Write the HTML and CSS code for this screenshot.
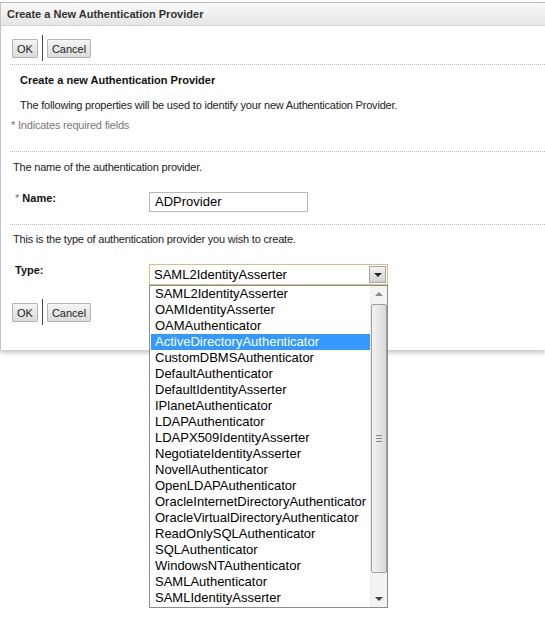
FILE: index.html
```html
<!DOCTYPE html>
<html lang="en">
<head>
    <meta charset="UTF-8">
    <title>Create a New Authentication Provider</title>
    <link rel="stylesheet" href="styles.css">
</head>
<body>
    <div class="panel">
        <div class="title-bar">Create a New Authentication Provider</div>

        <div class="toolbar">
            <button class="btn">OK</button>
            <span class="divider"></span>
            <button class="btn">Cancel</button>
        </div>

        <div class="intro">
            <h2>Create a new Authentication Provider</h2>
            <p>The following properties will be used to identify your new Authentication Provider.</p>
        </div>
        <p class="required"><span class="star">*</span> Indicates required fields</p>

        <div class="group">
            <p class="help">The name of the authentication provider.</p>
            <div class="row">
                <label class="label"><span class="star">*</span> Name:</label>
                <div class="text-input">ADProvider</div>
            </div>
        </div>

        <div class="group">
            <p class="help">This is the type of authentication provider you wish to create.</p>
            <div class="row">
                <label class="label">Type:</label>
                <div class="select">
                    <span class="select-value">SAML2IdentityAsserter</span>
                    <span class="select-arrow"></span>

                    <!-- open dropdown list -->
                    <div class="options">
                        <ul>
                            <li>SAML2IdentityAsserter</li>
                            <li>OAMIdentityAsserter</li>
                            <li>OAMAuthenticator</li>
                            <li class="selected">ActiveDirectoryAuthenticator</li>
                            <li>CustomDBMSAuthenticator</li>
                            <li>DefaultAuthenticator</li>
                            <li>DefaultIdentityAsserter</li>
                            <li>IPlanetAuthenticator</li>
                            <li>LDAPAuthenticator</li>
                            <li>LDAPX509IdentityAsserter</li>
                            <li>NegotiateIdentityAsserter</li>
                            <li>NovellAuthenticator</li>
                            <li>OpenLDAPAuthenticator</li>
                            <li>OracleInternetDirectoryAuthenticator</li>
                            <li>OracleVirtualDirectoryAuthenticator</li>
                            <li>ReadOnlySQLAuthenticator</li>
                            <li>SQLAuthenticator</li>
                            <li>WindowsNTAuthenticator</li>
                            <li>SAMLAuthenticator</li>
                            <li>SAMLIdentityAsserter</li>
                        </ul>
                        <div class="scrollbar">
                            <span class="scroll-up"></span>
                            <div class="track">
                                <div class="thumb"><span class="grip"></span></div>
                            </div>
                            <span class="scroll-down"></span>
                        </div>
                    </div>
                </div>
            </div>
        </div>

        <div class="toolbar bottom">
            <button class="btn">OK</button>
            <span class="divider"></span>
            <button class="btn">Cancel</button>
        </div>
    </div>
</body>
</html>
```

FILE: styles.css
```css
* { box-sizing: border-box; }
body { margin: 0; min-height: 617px; background: #fff; font-family: "Liberation Sans", Arial, sans-serif; font-size: 11px; line-height: 13px; letter-spacing: -0.2px; color: #222; }
p { margin: 0; }

.panel { margin-top: 2px; border-top: 1px solid #bdbdbd; border-left: 1px solid #c4c4c4; height: 348px; box-shadow: 0 3px 4px rgba(0,0,0,0.22); }
.title-bar { height: 23px; line-height: 22px; padding-left: 6px; font-weight: bold; letter-spacing: 0; color: #333; background: linear-gradient(#f9f9f9, #e5e5e5); border-bottom: 1px solid #d6d6d6; }

.toolbar { display: flex; align-items: flex-start; height: 39px; padding: 13px 0 0 2px; margin-left: 9px; border-bottom: 1px dotted #bbb; }
.toolbar.bottom { border-bottom: none; padding-top: 7px; }
.btn { font-family: inherit; font-size: 11px; letter-spacing: 0; height: 19px; padding: 0 4px; border: 1px solid #b5b5b5; border-radius: 1px; background: linear-gradient(#f4f4f4, #dcdcdc); color: #222; }
.divider { width: 1px; height: 26px; margin: -4px 4px 0; background: #444; }

.intro { padding: 9px 0 0 19px; }
.intro h2 { margin: 0 0 12px; font-size: 11px; line-height: 13px; font-weight: bold; color: #111; letter-spacing: 0; }
.required { padding: 7px 0 0 10px; color: #777; }
.star { color: #777; font-weight: normal; }

.group { height: 73px; margin: 0 0 0 9px; padding: 9px 0 0 3px; border-top: 1px dotted #bbb; }
.intro + .required + .group { margin-top: 19px; }
.group + .group { height: 72px; padding-top: 8px; }
.row { display: flex; align-items: flex-start; margin-top: 18px; }
.label { width: 136px; padding-left: 2px; font-weight: bold; letter-spacing: 0; color: #111; }

.text-input { width: 159px; height: 20px; line-height: 18px; padding-left: 5px; border: 1px solid #b9b9b9; font-size: 13px; letter-spacing: 0; color: #000; }

.select { position: relative; width: 239px; height: 21px; border: 1px solid #d6bf80; font-size: 13px; letter-spacing: 0; color: #000; }
.select-value { display: block; line-height: 19px; padding-left: 4px; }
.select-arrow { position: absolute; right: 1px; top: 1px; width: 17px; height: 17px; border: 1px solid #a5a5a5; background: linear-gradient(#f2f2f2, #d2d2d2); }
.select-arrow::after { content: ""; position: absolute; left: 4px; top: 6px; border-left: 4px solid transparent; border-right: 4px solid transparent; border-top: 4px solid #222; }

.options { position: absolute; left: -1px; top: 20px; width: 239px; height: 323px; border: 1px solid #8c8c8c; background: #fff; display: flex; z-index: 2; }
.options ul { list-style: none; margin: 0; padding: 0 0 0 1px; flex: 1; }
.options li { height: 16px; line-height: 16px; padding-left: 4px; white-space: nowrap; }
.options li.selected { background: #3399ff; color: #fff; }

.scrollbar { width: 17px; display: flex; flex-direction: column; background: #f3f3f3; border-left: 1px solid #eee; }
.scroll-up, .scroll-down { height: 17px; position: relative; }
.scroll-up::after { content: ""; position: absolute; left: 4px; top: 6px; border-left: 4px solid transparent; border-right: 4px solid transparent; border-bottom: 4px solid #8a8a8a; }
.scroll-down::after { content: ""; position: absolute; left: 4px; top: 7px; border-left: 4px solid transparent; border-right: 4px solid transparent; border-top: 4px solid #444; }
.track { flex: 1; padding: 1px 0 17px 0; }
.thumb { height: 100%; width: 16px; border: 1px solid #9d9d9d; border-radius: 2px; background: linear-gradient(to right, #f4f4f4, #d9d9d9); display: flex; align-items: center; justify-content: center; }
.grip { width: 6px; height: 7px; border-top: 1px solid #888; border-bottom: 1px solid #888; position: relative; }
.grip::after { content: ""; position: absolute; left: 0; right: 0; top: 2px; border-top: 1px solid #888; }
```
